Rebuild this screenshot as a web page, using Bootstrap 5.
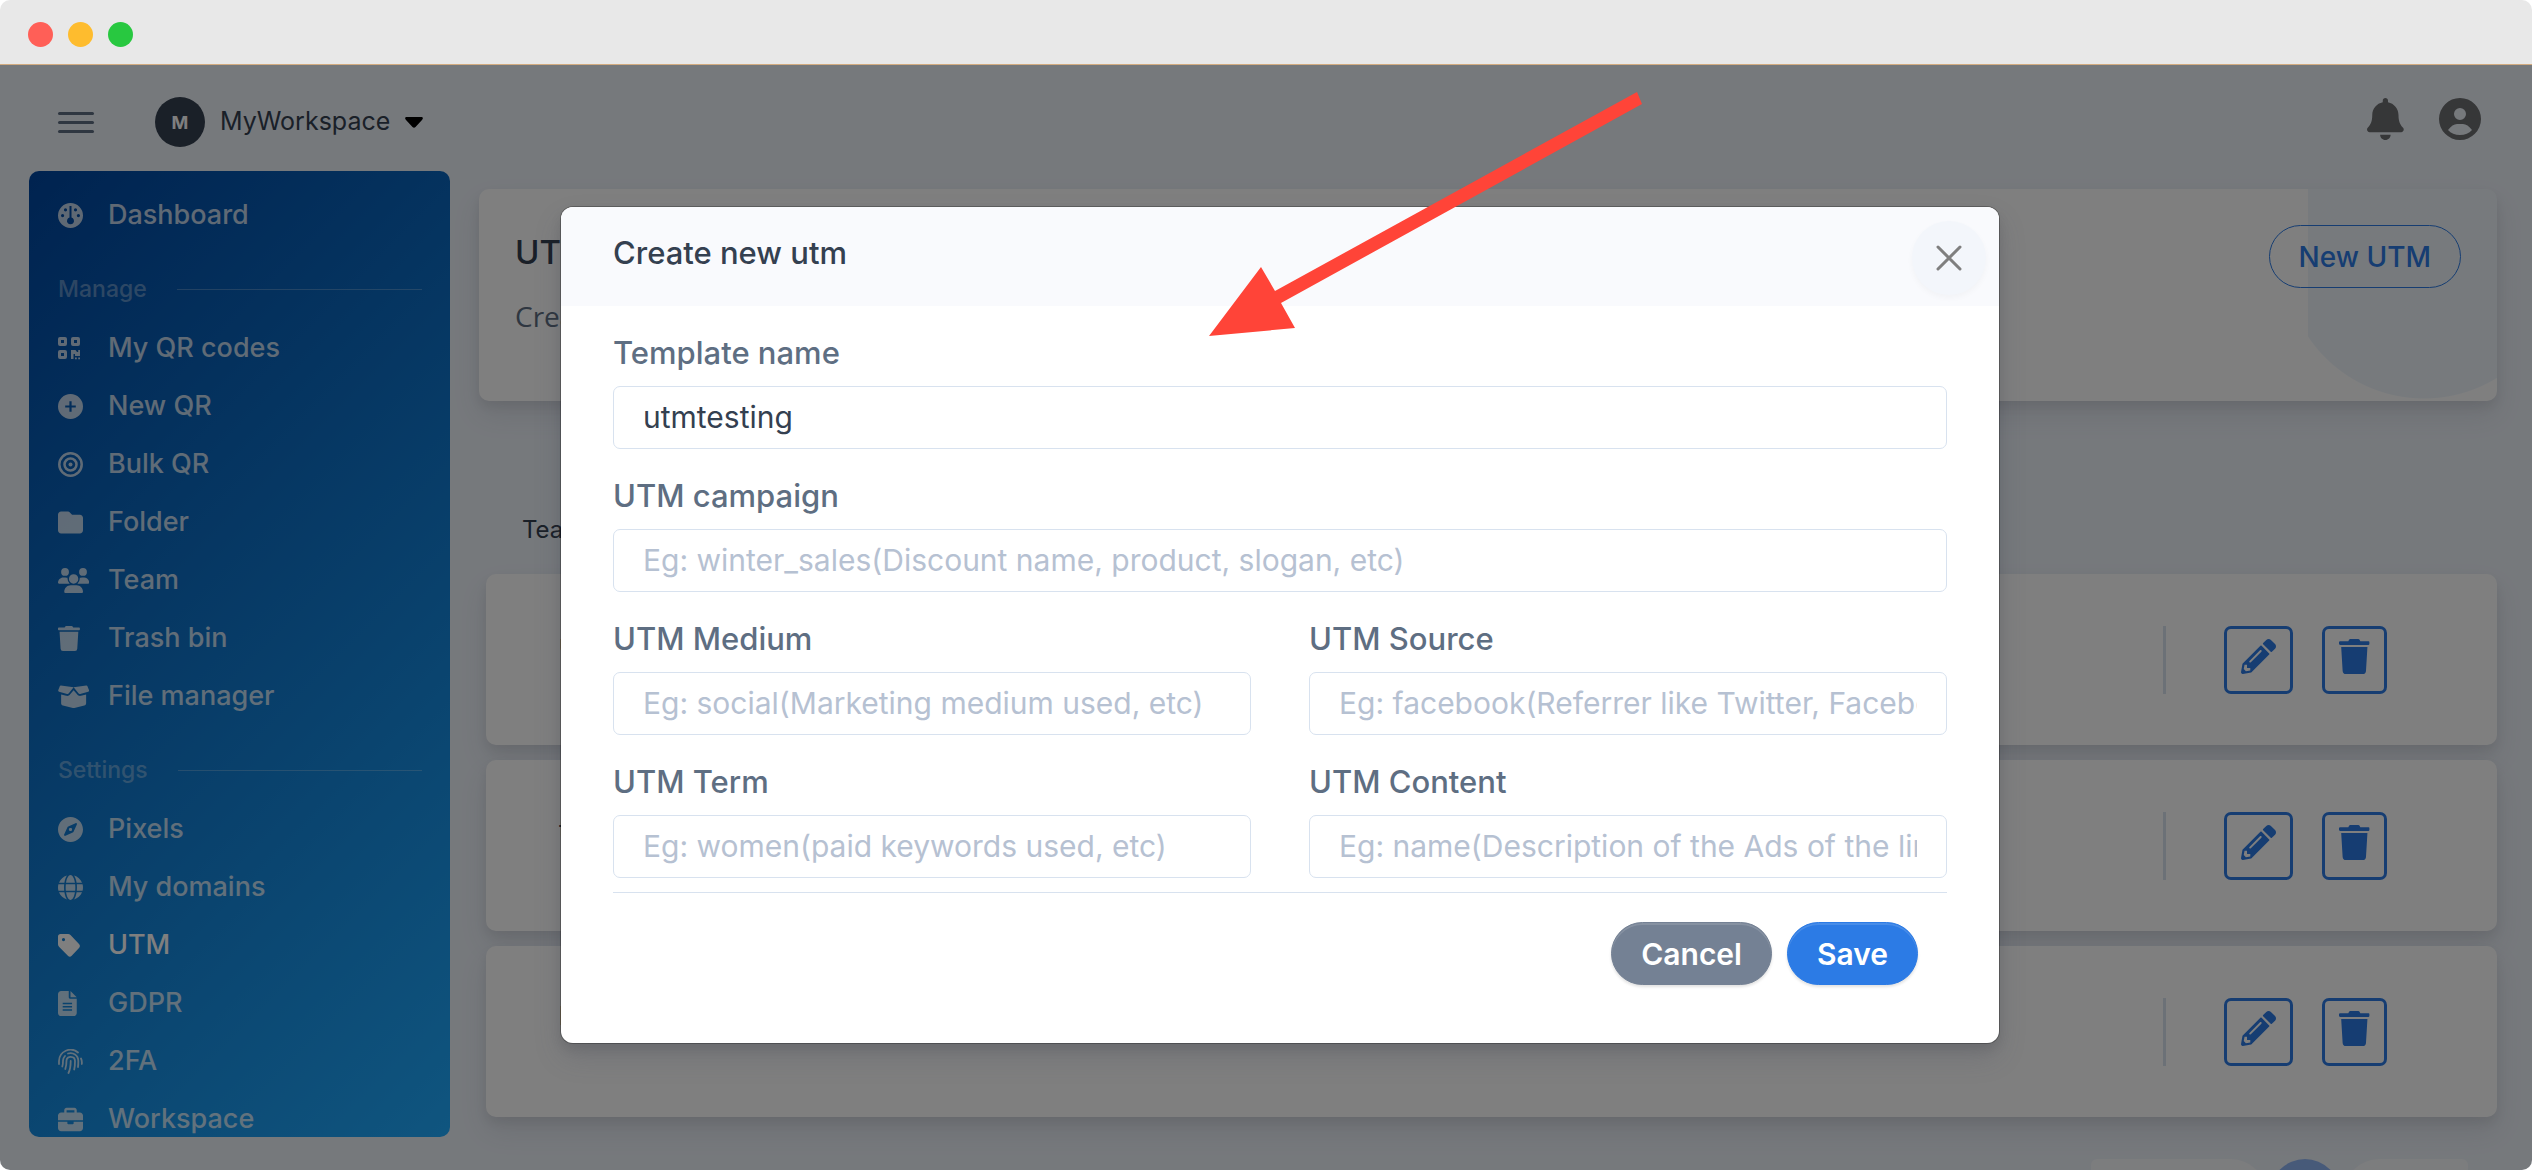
<!DOCTYPE html>
<html lang="en">
<head>
<meta charset="utf-8">
<meta name="viewport" content="width=device-width, initial-scale=1">
<title>UTM</title>
<link href="https://cdn.jsdelivr.net/npm/bootstrap@5.3.0/dist/css/bootstrap.min.css" rel="stylesheet">
<style>
  body { font-family: Inter, "Open Sans", sans-serif; font-size: 25px; color: #344050; background: #fff; }
  svg { display: block; fill: currentColor; }

  /* window frame */
  .window-bar { height: 65px; padding: 4px 28px 0; gap: 15px; background: #e8e8e8; border-bottom: 1px solid #d2ab80; border-radius: 10px 10px 0 0; }
  .window-dot { width: 25px; height: 25px; border-radius: 50%; }
  .window-dot.close-dot { background: #ff5f57; }
  .window-dot.min-dot { background: #febc2e; }
  .window-dot.max-dot { background: #28c840; }
  .app { min-height: 0; background: #edf2f9; border-radius: 0 0 10px 10px; }

  /* top bar */
  .top-bar { height: 106px; padding: 8px 51px 0 58px; }
  .menu-toggle { display: flex; flex-direction: column; gap: 6px; width: 36px; margin-right: 61px; }
  .menu-toggle span { height: 3px; border-radius: 2px; background: #5e6e82; }
  .workspace-menu { font-size: 25px; color: #344050; }
  .avatar { width: 50px; height: 50px; background: #344050; color: #fff; font-size: 18px; font-weight: 700; margin-right: 15px; }
  .caret { width: 18px; height: 11px; margin-left: 15px; color: #000; }
  .top-icons { gap: 35px; color: #6c6e70; padding-bottom: 6px; }
  .top-icons svg { height: 42px; }

  /* sidebar */
  .main-area { min-height: 0; padding: 0 35px 0 29px; gap: 29px; }
  .side-nav { width: 421px; padding: 15px 28px 0 29px; margin-bottom: 33px; border-radius: 10px; background: linear-gradient(135deg, #0046a0, #1fabff); }
  .side-nav .nav-link { height: 58px; padding: 0; color: rgba(255,255,255,.75); font-size: 27px; font-weight: 500; }
  .side-nav .nav-link.active { color: #fff; }
  .nav-glyph { width: 50px; }
  .nav-glyph svg { height: 25px; }
  .side-heading { height: 75px; padding: 30px 0 15px; gap: 30px; font-size: 23px; font-weight: 500; color: rgba(255,255,255,.36); }
  .side-heading hr { margin: 0; border-top: 1px solid #fff; opacity: .25; }

  /* content */
  .content { padding-top: 18px; }
  .panel { background-color: #fff; border-radius: 10px; box-shadow: 0 14px 28px rgba(65,69,88,.1), 0 6px 12px rgba(0,0,0,.07); }
  .page-head { min-height: 212px; padding: 36px; background-image: radial-gradient(circle 140px at 116px 70px, #eff5fb 139px, transparent 140px); background-position: right top; background-size: 189px 100%; background-repeat: no-repeat; }
  .page-title { margin: 5px 0 22px; font-size: 33px; line-height: 44px; font-weight: 500; }
  .page-note { margin: 0; font: 28px/40px "Open Sans", sans-serif; color: #5e6e82; }
  .btn-round { height: 63px; padding: 0 29px; border-radius: 32px; font-size: 30px; font-weight: 600; line-height: 36px; }
  .btn-new { font-size: 28px; font-weight: 500; color: #2c7be5; border-color: #2c7be5; }
  .list-area { padding-left: 7px; }
  .list-label { margin: 111px 0 26px 36px; font-size: 24px; line-height: 36px; }
  .utm-list { gap: 15px; }
  .utm-row { padding: 52px 110px 51px 73px; line-height: 36px; }
  .row-rule { width: 3px; height: 68px; margin-right: 58px; background: #d8e2ef; }
  .btn-tool { width: 69px; height: 68px; padding: 10px 0 0; border: 3px solid #2c7be5; border-radius: 7px; color: #2c7be5; display: flex; justify-content: center; align-items: flex-start; }
  .btn-tool svg { height: 35px; }
  .btn-tool.narrow { width: 65px; margin-left: 29px; }
  .pagination { margin: 42px 29px 0 0; gap: 5px; }
  .pagination .page-link { width: 124px; height: 70px; border: 0; border-radius: 35px; background: #f9fafc; }
  .pagination .wide .page-link { width: 175px; }
  .pagination .active .page-link { width: 70px; background: #8fb4f3; }

  /* dialog */
  .app .modal-backdrop, .app .modal { position: absolute; width: 100%; height: 100%; }
  .app .modal { padding-left: 28px; overflow: hidden; }
  .modal-dialog { max-width: 1438px; margin: 142px auto; }
  .modal-content { border: 0; border-radius: 12px; overflow: hidden; }
  .dialog-frame { border-radius: 12px; box-shadow: 0 0 0 1px rgba(0,0,0,.25), 0 14px 28px rgba(65,69,88,.2), 0 6px 12px rgba(0,0,0,.1); }
  .modal-header { height: 99px; padding: 14px 13px 0 52px; align-items: flex-start; border: 0; background: #f9fafd; }
  .modal-title { margin-top: 14px; font-size: 31px; line-height: 36px; font-weight: 500; }
  .btn-dismiss { width: 74px; height: 74px; border: 0; border-radius: 50%; background: #f3f6fb; color: #7f7f7f; box-shadow: 0 3px 6px rgba(0,0,0,.03); display: flex; align-items: center; justify-content: center; }
  .modal-body { padding: 29px 52px 58px; }
  .modal-body .row { --bs-gutter-x: 58px; --bs-gutter-y: 29px; }
  .form-label { display: block; margin-bottom: 15px; font-size: 31px; line-height: 36px; font-weight: 500; color: #5e6e82; }
  .form-control { height: 63px; padding: 0 29px 2px; border: 1px solid #d8e2ef; border-radius: 7px; font-size: 30px; line-height: 36px; color: #344050; }
  .form-control::placeholder { color: #b6c1d2; }
  .dialog-actions { margin-top: 14px; padding: 29px 29px 0; gap: 15px; border-top: 1px solid #d8e2ef; }
  .btn-cancel { color: #fff; background: #748194; border-color: #748194; }
  .btn-save { color: #fff; background: #2c7be5; border-color: #2c7be5; }
  .btn-cancel, .btn-save { box-shadow: 0 2px 3px rgba(0,0,0,.12), inset 0 2px 0 rgba(255,255,255,.13); }
  .pointer { position: absolute; left: 1209px; top: 27px; z-index: 1100; pointer-events: none; color: #ff4438; }
</style>
</head>
<body class="vh-100 d-flex flex-column overflow-hidden">

<svg width="0" height="0" class="position-absolute" aria-hidden="true">
  <symbol id="i-trash" viewBox="0 0 448 512"><path d="M432 32H312l-9.400-18.700A24 24 0 0 0 281.100 0H166.800a23.720 23.720 0 0 0-21.400 13.300L136 32H16A16 16 0 0 0 0 48v22a16 16 0 0 0 16 16h416a16 16 0 0 0 16-16V48a16 16 0 0 0-16-16zM53.200 467a48 48 0 0 0 47.900 45h245.800a48 48 0 0 0 47.900-45L416 118H32z"/></symbol>
  <symbol id="i-pencil" viewBox="0 0 512 512"><path d="M497.900 142.100l-46.100 46.100c-4.700 4.700-12.300 4.700-17 0l-111-111c-4.700-4.700-4.700-12.300 0-17l46.100-46.100c18.700-18.700 49.100-18.700 67.900 0l60.100 60.100c18.800 18.700 18.800 49.100 0 67.900zM284.200 99.800L21.600 362.400.4 483.900c-2.900 16.400 11.400 30.600 27.800 27.800l121.500-21.300 262.600-262.600c4.700-4.700 4.700-12.300 0-17l-111-111c-4.800-4.700-12.400-4.700-17.100 0zM124.100 339.900c-5.500-5.500-5.500-14.300 0-19.800l154-154c5.500-5.500 14.300-5.500 19.800 0s5.500 14.300 0 19.800l-154 154c-5.500 5.500-14.300 5.500-19.800 0zM88 424h48v36.300l-64.500 11.300-31.100-31.100L51.700 376H88v48z"/></symbol>
</svg>

<header class="window-bar d-flex align-items-center flex-shrink-0">
  <span class="window-dot close-dot"></span><span class="window-dot min-dot"></span><span class="window-dot max-dot"></span>
</header>

<div class="app flex-grow-1 position-relative overflow-hidden d-flex flex-column">
  <div class="top-bar d-flex align-items-center flex-shrink-0">
    <button type="button" class="menu-toggle btn p-0 border-0 rounded-0" aria-label="Toggle menu"><span></span><span></span><span></span></button>
    <button type="button" class="workspace-menu btn p-0 border-0 d-flex align-items-center">
      <span class="avatar rounded-circle d-flex align-items-center justify-content-center">M</span>
      MyWorkspace
      <svg class="caret" viewBox="0 0 18 11"><path d="M2 0h14c2 0 2.500 1.500 1 3l-6.500 7c-1 1-2 1-3 0L1 3C-.5 1.500 0 0 2 0z"/></svg>
    </button>
    <div class="top-icons d-flex ms-auto">
      <a href="#" class="text-reset" aria-label="Notifications"><svg viewBox="0 0 448 512"><path d="M288 448c0 36-28.700 64-64 64s-64-28-64-64zM439.400 362.300c-19.300-20.800-55.500-52-55.500-154.300 0-77.700-54.500-139.900-127.900-155.200V32c0-17.700-14.300-32-32-32s-32 14.300-32 32v20.800C118.600 68.100 64.100 130.300 64.100 208c0 102.300-36.200 133.500-55.500 154.300-6 6.400-8.700 14.200-8.600 21.700.1 16.400 13 32 32.100 32h383.800c19.100 0 32-15.600 32.100-32 .1-7.500-2.600-15.300-8.600-21.700z"/></svg></a>
      <a href="#" class="text-reset" aria-label="Account"><svg viewBox="0 0 42 42"><path fill-rule="evenodd" d="M21 0a21 21 0 1 0 0 42a21 21 0 1 0 0-42zM21 10a6 6 0 1 1 0 12a6 6 0 1 1 0-12zM9 32c3-4 6-6 9-6h6c3 0 6 2 9 6c-3 3.500-7 5-12 5s-9-1.500-12-5z"/></svg></a>
    </div>
  </div>

  <div class="main-area d-flex flex-grow-1">
    <nav class="side-nav flex-shrink-0 overflow-hidden">
      <div class="nav flex-column flex-nowrap">
        <a href="#" class="nav-link d-flex align-items-center"><span class="nav-glyph"><svg viewBox="0 0 25 25"><path fill-rule="evenodd" d="M12.500 0a12.500 12.500 0 1 0 0 25a12.500 12.500 0 1 0 0-25zM11.500 3h2v11.500a3.500 3.500 0 1 1-2 0zM7.500 5.200a1.600 1.600 0 1 1 0 3.200a1.600 1.600 0 1 1 0-3.200zM17.500 5.200a1.600 1.600 0 1 1 0 3.200a1.600 1.600 0 1 1 0-3.200zM4.600 11a1.600 1.600 0 1 1 0 3.200a1.600 1.600 0 1 1 0-3.200zM20.400 11a1.600 1.600 0 1 1 0 3.200a1.600 1.600 0 1 1 0-3.200z"/></svg></span>Dashboard</a>
        <div class="side-heading d-flex align-items-center"><span>Manage</span><hr class="flex-grow-1"></div>
        <a href="#" class="nav-link d-flex align-items-center"><span class="nav-glyph"><svg viewBox="0 0 25 25"><path fill-rule="evenodd" d="M2 1h5a2 2 0 0 1 2 2v5a2 2 0 0 1-2 2H2a2 2 0 0 1-2-2V3a2 2 0 0 1 2-2zM3 4v3h3v-3zM15 1h5a2 2 0 0 1 2 2v5a2 2 0 0 1-2 2h-5a2 2 0 0 1-2-2V3a2 2 0 0 1 2-2zM16 4v3h3v-3zM2 14h5a2 2 0 0 1 2 2v5a2 2 0 0 1-2 2H2a2 2 0 0 1-2-2v-5a2 2 0 0 1 2-2zM3 17v3h3v-3zM13 14h4.500l1.500 2h1.200v-2H22v6h-5v-2h-1.500v5H13zM17 21.500h1.800v1.800H17zM20.200 21.500H22v1.800h-1.800z"/></svg></span>My QR codes</a>
        <a href="#" class="nav-link d-flex align-items-center"><span class="nav-glyph"><svg viewBox="0 0 25 25"><path fill-rule="evenodd" d="M12.500 0a12.500 12.500 0 1 0 0 25a12.500 12.500 0 1 0 0-25zM11.400 7.200h2.200v4.200h4.200v2.200h-4.200v4.200h-2.200v-4.200H7.200v-2.200h4.200z"/></svg></span>New QR</a>
        <a href="#" class="nav-link d-flex align-items-center"><span class="nav-glyph"><svg viewBox="0 0 25 25"><g fill="none" stroke="currentColor" stroke-width="2.500"><circle cx="12.500" cy="12.500" r="11.200"/><circle cx="12.500" cy="12.500" r="6"/></g><circle cx="12.500" cy="12.500" r="2"/></svg></span>Bulk QR</a>
        <a href="#" class="nav-link d-flex align-items-center"><span class="nav-glyph"><svg viewBox="0 0 512 512"><path d="M448 96H288l-50-50c-8-8-18-14-32-14H64C28 32 0 60 0 96v320c0 36 28 64 64 64h384c36 0 64-28 64-64V160c0-36-28-64-64-64z"/></svg></span>Folder</a>
        <a href="#" class="nav-link d-flex align-items-center"><span class="nav-glyph"><svg viewBox="0 0 640 512"><path d="M144 0a80 80 0 1 1 0 160A80 80 0 1 1 144 0zM512 0a80 80 0 1 1 0 160A80 80 0 1 1 512 0zM0 299c0-59 48-107 107-107h43c16 0 31 4 45 10a144 144 0 0 0 46 118H21c-12 0-21-10-21-21zM405 320h-6a144 144 0 0 0 46-118c14-6 29-10 45-10h43c59 0 107 48 107 107 0 12-10 21-21 21zM224 224a96 96 0 1 1 192 0 96 96 0 1 1-192 0zM128 485c0-74 60-133 133-133h118c74 0 133 60 133 133 0 15-12 27-27 27H155c-15 0-27-12-27-27z"/></svg></span>Team</a>
        <a href="#" class="nav-link d-flex align-items-center"><span class="nav-glyph"><svg viewBox="0 0 448 512"><use href="#i-trash"/></svg></span>Trash bin</a>
        <a href="#" class="nav-link d-flex align-items-center"><span class="nav-glyph"><svg viewBox="0 0 640 512"><path d="M59 30L320 64l261-34c8-1 16 3 20 11l33 83c6 14 0 30-16 35l-164 46c-14 4-28-2-36-14L320 66l-98 125c-8 12-22 18-36 14L22 159c-16-5-22-21-16-35l33-83c4-8 12-12 20-11zM320 128l71 84c17 27 49 40 80 31l105-30v180c0 22-15 41-37 47l-204 51c-10 3-20 3-30 0L101 440c-22-6-37-25-37-47V213l105 30c31 9 63-4 80-31z"/></svg></span>File manager</a>
        <div class="side-heading d-flex align-items-center"><span>Settings</span><hr class="flex-grow-1"></div>
        <a href="#" class="nav-link d-flex align-items-center"><span class="nav-glyph"><svg viewBox="0 8 496 496"><path d="M225.400 233.400c-12.500 12.500-12.500 32.700 0 45.200s32.700 12.500 45.200 0 12.500-32.700 0-45.200-32.700-12.500-45.200 0zM248 8C111 8 0 119 0 256s111 248 248 248 248-111 248-248S385 8 248 8zm126.100 148L308.200 300.400a32 32 0 0 1-15.800 15.800l-144.300 66c-16.700 7.600-33.900-9.600-26.200-26.200l65.900-144.400a32 32 0 0 1 15.800-15.800l144.300-66c16.700-7.600 33.900 9.600 26.200 26.200z"/></svg></span>Pixels</a>
        <a href="#" class="nav-link d-flex align-items-center"><span class="nav-glyph"><svg viewBox="0 8 496 496"><path d="M336.500 160C322 70.700 287.800 8 248 8s-74 62.700-88.500 152h177zM152 256c0 22.200 1.200 43.500 3.300 64h185.300c2.100-20.500 3.300-41.800 3.300-64s-1.200-43.500-3.300-64H155.300c-2.100 20.500-3.300 41.800-3.300 64zm324.700-96c-28.600-67.900-86.500-120.400-158-141.600 24.400 33.800 41.200 84.700 50 141.600h108zM177.200 18.400C105.800 39.600 47.800 92.100 19.300 160h108c8.700-56.900 25.500-107.800 49.900-141.600zM487.400 192H372.700c2.100 21 3.300 42.500 3.300 64s-1.200 43-3.300 64h114.600c5.500-20.500 8.600-41.800 8.600-64s-3.100-43.500-8.500-64zM120 256c0-21.500 1.200-43 3.300-64H8.600C3.200 212.500 0 233.800 0 256s3.200 43.500 8.600 64h114.600c-2-21-3.200-42.500-3.200-64zm39.500 96c14.500 89.300 48.700 152 88.500 152s74-62.700 88.500-152h-177zm159.300 141.600c71.400-21.200 129.400-73.700 158-141.600h-108c-8.800 56.900-25.600 107.800-50 141.600zM19.300 352c28.600 67.900 86.500 120.400 158 141.600-24.400-33.800-41.200-84.700-50-141.600h-108z"/></svg></span>My domains</a>
        <a href="#" class="nav-link active d-flex align-items-center" aria-current="page"><span class="nav-glyph"><svg viewBox="0 0 25 25"><path fill-rule="evenodd" d="M2.500 1H10c1 0 1.800.3 2.500 1l8.500 9c1.200 1.300 1.200 2.800 0 4l-7.300 7.800c-1.100 1.200-2.600 1.200-3.800 0L1 13.800c-.7-.7-1-1.500-1-2.500V3.500C0 2 1 1 2.500 1zM5.500 5a1.600 1.600 0 1 0 0 3.200a1.600 1.600 0 1 0 0-3.200z"/></svg></span>UTM</a>
        <a href="#" class="nav-link d-flex align-items-center"><span class="nav-glyph"><svg viewBox="0 0 384 512"><path fill-rule="evenodd" d="M64 0h156v128c0 18 14 32 32 32h132v288c0 35-29 64-64 64H64c-35 0-64-29-64-64V64C0 29 29 0 64 0zM256 0l128 128H256zM96 240v30h192v-30zM96 308v30h192v-30zM96 376v30h192v-30z"/></svg></span>GDPR</a>
        <a href="#" class="nav-link d-flex align-items-center"><span class="nav-glyph"><svg viewBox="0 0 25 25"><g fill="none" stroke="currentColor" stroke-width="1.800" stroke-linecap="round"><path d="M1 15v-3a11.500 11.500 0 0 1 19-8.500"/><path d="M23 9.500c1 2 1 3.500.8 5.500"/><path d="M4.300 17.500c.8-2 .7-4 .7-6a7.700 7.700 0 0 1 2-4.500"/><path d="M10 4.500c5-1.500 10.300 1.500 10.300 7.500 0 2 0 4-.3 6"/><path d="M7.300 20c1-2.800 1.200-5 1.200-8.500 0-5 8.500-5 8.500.5 0 3 0 5.500-.8 8.500"/><path d="M10.500 24c1.700-3.500 2.200-7 2.200-12"/></g></svg></span>2FA</a>
        <a href="#" class="nav-link d-flex align-items-center"><span class="nav-glyph"><svg viewBox="0 0 512 512"><path fill-rule="evenodd" d="M176 16h160c27 0 48 21 48 48v48h64c35 0 64 29 64 64v96H0v-96c0-35 29-64 64-64h64V64c0-27 21-48 48-48zm0 48v48h160V64zM0 304h192v32c0 10 8 18 18 18h92c10 0 18-8 18-18v-32h192v128c0 35-29 64-64 64H64c-35 0-64-29-64-64z"/></svg></span>Workspace</a>
      </div>
    </nav>

    <main class="content flex-grow-1">
      <section class="panel page-head d-flex justify-content-between align-items-start">
        <div>
          <h1 class="page-title">UTM</h1>
          <p class="page-note">Create</p>
        </div>
        <button type="button" class="btn btn-outline-primary btn-round btn-new">New UTM</button>
      </section>
      <div class="list-area">
        <div class="list-label">Team</div>
        <div class="utm-list d-flex flex-column">
          <article class="panel utm-row d-flex"><span>utm</span><span class="row-rule ms-auto"></span>
            <button type="button" class="btn-tool bg-transparent" aria-label="Edit"><svg viewBox="0 0 512 512"><use href="#i-pencil"/></svg></button>
            <button type="button" class="btn-tool narrow bg-transparent" aria-label="Delete"><svg viewBox="0 0 448 512"><use href="#i-trash"/></svg></button></article>
          <article class="panel utm-row d-flex"><span>test</span><span class="row-rule ms-auto"></span>
            <button type="button" class="btn-tool bg-transparent" aria-label="Edit"><svg viewBox="0 0 512 512"><use href="#i-pencil"/></svg></button>
            <button type="button" class="btn-tool narrow bg-transparent" aria-label="Delete"><svg viewBox="0 0 448 512"><use href="#i-trash"/></svg></button></article>
          <article class="panel utm-row d-flex"><span>link</span><span class="row-rule ms-auto"></span>
            <button type="button" class="btn-tool bg-transparent" aria-label="Edit"><svg viewBox="0 0 512 512"><use href="#i-pencil"/></svg></button>
            <button type="button" class="btn-tool narrow bg-transparent" aria-label="Delete"><svg viewBox="0 0 448 512"><use href="#i-trash"/></svg></button></article>
        </div>
        <ul class="pagination justify-content-end">
          <li class="page-item wide"><a class="page-link" href="#" aria-label="Previous page"></a></li>
          <li class="page-item active"><a class="page-link" href="#" aria-label="Current page"></a></li>
          <li class="page-item"><a class="page-link" href="#" aria-label="Next page"></a></li>
        </ul>
      </div>
    </main>
  </div>

  <div class="modal-backdrop show"></div>
  <div class="modal d-block" role="dialog" aria-labelledby="dialogTitle">
    <div class="modal-dialog">
      <div class="dialog-frame">
      <div class="modal-content">
        <div class="modal-header">
          <h2 class="modal-title" id="dialogTitle">Create new utm</h2>
          <button type="button" class="btn-dismiss" aria-label="Close"><svg width="26" height="26" viewBox="0 0 26 26"><path d="M2 2l22 22M24 2L2 24" stroke="currentColor" stroke-width="3" stroke-linecap="round"/></svg></button>
        </div>
        <form class="modal-body">
          <div class="row">
            <div class="col-12"><label class="form-label" for="tplName">Template name</label><input class="form-control" id="tplName" type="text" value="utmtesting"></div>
            <div class="col-12"><label class="form-label" for="campaign">UTM campaign</label><input class="form-control" id="campaign" type="text" placeholder="Eg: winter_sales(Discount name, product, slogan, etc)"></div>
            <div class="col-6"><label class="form-label" for="medium">UTM Medium</label><input class="form-control" id="medium" type="text" placeholder="Eg: social(Marketing medium used, etc)"></div>
            <div class="col-6"><label class="form-label" for="source">UTM Source</label><input class="form-control" id="source" type="text" placeholder="Eg: facebook(Referrer like Twitter, Facebook, etc)"></div>
            <div class="col-6"><label class="form-label" for="term">UTM Term</label><input class="form-control" id="term" type="text" placeholder="Eg: women(paid keywords used, etc)"></div>
            <div class="col-6"><label class="form-label" for="contentField">UTM Content</label><input class="form-control" id="contentField" type="text" placeholder="Eg: name(Description of the Ads of the link)"></div>
          </div>
          <div class="dialog-actions d-flex justify-content-end">
            <button type="button" class="btn btn-round btn-cancel">Cancel</button>
            <button type="submit" class="btn btn-round btn-save">Save</button>
          </div>
        </form>
      </div>
      </div>
    </div>
  </div>

  <svg class="pointer" width="434" height="245" viewBox="0 0 434 245" aria-hidden="true"><path d="M0 244L52 175L66 199L428 0L433 12L72 211L86 236Z"/></svg>
</div>

<script src="https://cdn.jsdelivr.net/npm/bootstrap@5.3.0/dist/js/bootstrap.bundle.min.js"></script>
</body>
</html>
